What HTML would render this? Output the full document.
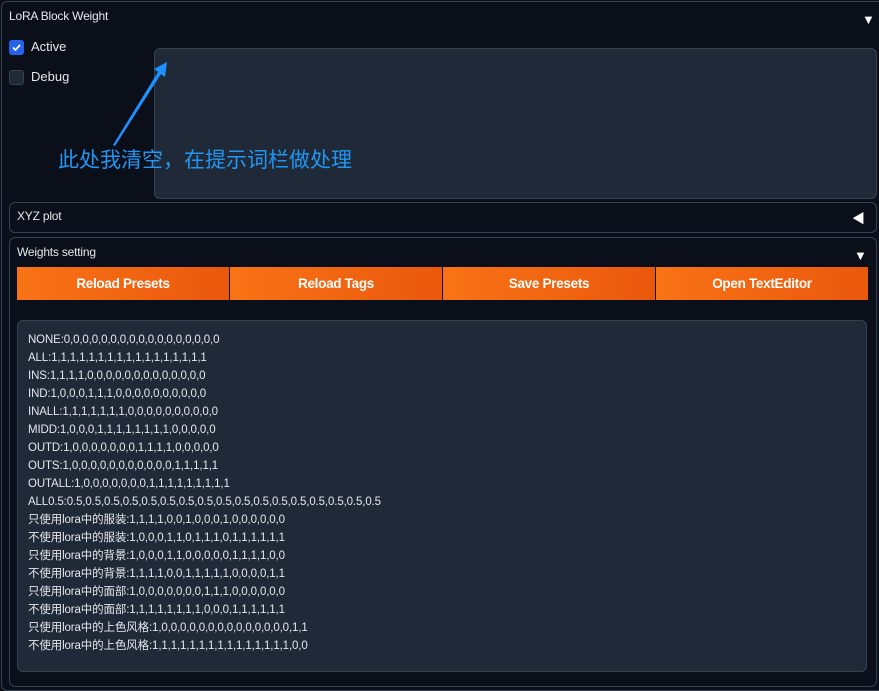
<!DOCTYPE html>
<html><head><meta charset="utf-8"><style>
body{margin:0;width:879px;height:684px;background:#0b0f19;font-family:"Liberation Sans","Noto Sans CJK SC",sans-serif;color:#e5e7eb;position:relative;overflow:hidden}
.abs{position:absolute}
.outer{left:1px;top:1px;width:890px;height:690px;border:1px solid #374151;border-radius:6px;box-sizing:border-box}
.box{border:1px solid #374151;border-radius:6px;box-sizing:border-box}
.lbl{font-size:12px;color:#e5e7eb;letter-spacing:-0.2px}
.btn{position:absolute;top:267px;height:33px;background:linear-gradient(90deg,#f97316,#ea580c);color:#fff;font-weight:bold;font-size:13.5px;text-align:center;line-height:33px;letter-spacing:-0.3px}
.ta{left:17px;top:320px;width:850px;height:352px;background:#1f2937;border:1px solid #374151;border-radius:6px;box-sizing:border-box;padding:10px 10px;font-size:11.5px;line-height:18px;color:#e5e7eb;white-space:pre;letter-spacing:-0.13px}
</style></head><body>
<div class="abs outer"></div>
<div class="abs lbl" style="left:9px;top:9px">LoRA Block Weight</div>
<div class="abs" style="left:862px;top:12px;color:#fff;font-size:13px">▼</div>
<div class="abs" style="left:9px;top:40px;width:15px;height:15px;background:#2563eb;border-radius:3px"><svg width="15" height="15"><path d="M4 7.5l2.5 2.5 4.5-5" stroke="#fff" stroke-width="1.8" fill="none"/></svg></div>
<div class="abs" style="left:31px;top:39px;font-size:13px">Active</div>
<div class="abs" style="left:9px;top:70px;width:15px;height:15px;background:#1f2937;border:1px solid #374151;box-sizing:border-box;border-radius:3px"></div>
<div class="abs" style="left:31px;top:69px;font-size:13px">Debug</div>
<div class="abs box" style="left:154px;top:48px;width:723px;height:151px;background:#1f2937"></div>
<svg class="abs" style="left:110px;top:60px" width="60" height="90"><path d="M3 85 L48 12 L44 9 L57 2 L55 17 L51 14 L5 86Z" fill="#1e90ff"/></svg>
<div class="abs" style="left:58px;top:144px;font-size:21px;color:#2196f3">此处我清空，在提示词栏做处理</div>
<div class="abs box" style="left:9px;top:202px;width:868px;height:31px"></div>
<div class="abs lbl" style="left:17px;top:209px">XYZ plot</div>
<div class="abs" style="left:852px;top:208px;color:#fff;font-size:13px">◀</div>
<div class="abs box" style="left:9px;top:237px;width:868px;height:450px"></div>
<div class="abs lbl" style="left:17px;top:245px">Weights setting</div>
<div class="abs" style="left:854px;top:248px;color:#fff;font-size:13px">▼</div>
<div class="btn" style="left:17px;width:212px">Reload Presets</div>
<div class="btn" style="left:230px;width:212px">Reload Tags</div>
<div class="btn" style="left:443px;width:212px">Save Presets</div>
<div class="btn" style="left:656px;width:212px">Open TextEditor</div>
<div class="abs ta">NONE:0,0,0,0,0,0,0,0,0,0,0,0,0,0,0,0,0
ALL:1,1,1,1,1,1,1,1,1,1,1,1,1,1,1,1,1
INS:1,1,1,1,0,0,0,0,0,0,0,0,0,0,0,0,0
IND:1,0,0,0,1,1,1,0,0,0,0,0,0,0,0,0,0
INALL:1,1,1,1,1,1,1,0,0,0,0,0,0,0,0,0,0
MIDD:1,0,0,0,1,1,1,1,1,1,1,1,0,0,0,0,0
OUTD:1,0,0,0,0,0,0,0,1,1,1,1,0,0,0,0,0
OUTS:1,0,0,0,0,0,0,0,0,0,0,0,1,1,1,1,1
OUTALL:1,0,0,0,0,0,0,0,1,1,1,1,1,1,1,1,1
ALL0.5:0.5,0.5,0.5,0.5,0.5,0.5,0.5,0.5,0.5,0.5,0.5,0.5,0.5,0.5,0.5,0.5,0.5
只使用lora中的服装:1,1,1,1,0,0,1,0,0,0,1,0,0,0,0,0,0
不使用lora中的服装:1,0,0,0,1,1,0,1,1,1,0,1,1,1,1,1,1
只使用lora中的背景:1,0,0,0,1,1,0,0,0,0,0,1,1,1,1,0,0
不使用lora中的背景:1,1,1,1,0,0,1,1,1,1,1,0,0,0,0,1,1
只使用lora中的面部:1,0,0,0,0,0,0,0,1,1,1,0,0,0,0,0,0
不使用lora中的面部:1,1,1,1,1,1,1,1,0,0,0,1,1,1,1,1,1
只使用lora中的上色风格:1,0,0,0,0,0,0,0,0,0,0,0,0,0,0,1,1
不使用lora中的上色风格:1,1,1,1,1,1,1,1,1,1,1,1,1,1,1,0,0</div>
</body></html>
